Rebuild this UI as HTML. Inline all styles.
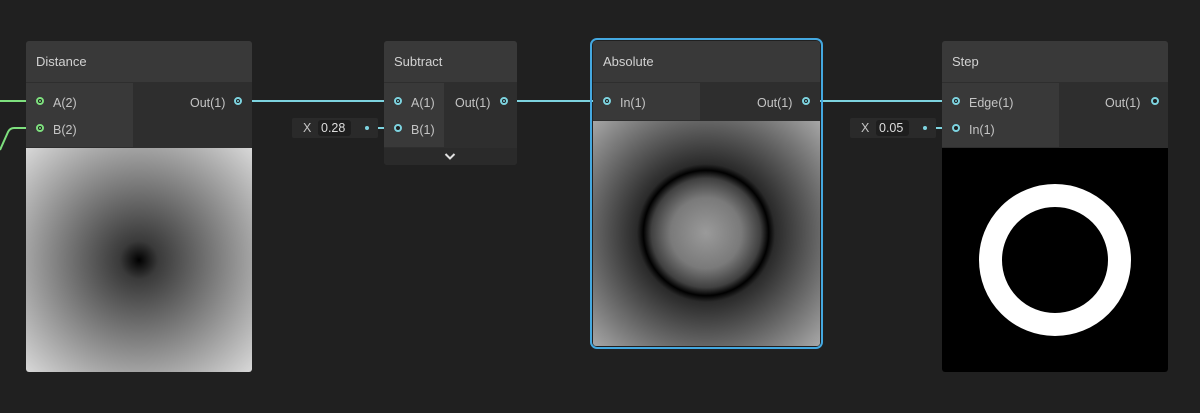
<!DOCTYPE html>
<html><head><style>
body{margin:0;width:1200px;height:413px;background:#202020;position:relative;overflow:hidden;font-family:"Liberation Sans",sans-serif;color:#c4c4c4;font-size:12.5px}
.a{position:absolute}
.hd{background:#393939;font-size:13px;color:#d2d2d2;}
.in{background:#393939}
.out{background:#2e2e2e}
.port{position:absolute;width:8px;height:8px;border-radius:50%;box-sizing:border-box}
.g{border:2px solid #7ee07e;background:#202020}
.g::after,.c::after{content:"";position:absolute;left:1px;top:1px;width:2px;height:2px;border-radius:50%}
.g::after{background:#7ee07e}
.c{border:2px solid #7dd3df;background:#202020}
.c.f::after{background:#7dd3df}
.wire{position:absolute;height:2px;background:#7dd3df}
</style></head><body>
<svg class="a" style="left:0;top:0" width="40" height="180"><path d="M0 101 H28" stroke="#7ee07e" stroke-width="2" fill="none"/><path d="M0 150 L8 132 Q10 128 14 128 H28" stroke="#7ee07e" stroke-width="2" fill="none"/></svg>
<div class="wire" style="left:245px;top:100px;width:150px"></div>
<div class="wire" style="left:510px;top:100px;width:95px"></div>
<div class="wire" style="left:815px;top:100px;width:140px"></div>
<div class="wire" style="left:370px;top:127px;width:25px"></div>
<div class="wire" style="left:928px;top:127px;width:25px"></div>

<!-- Distance -->
<div class="a" style="left:26px;top:41px;width:226px;height:331px;background:#2e2e2e;border-radius:3px;overflow:hidden">
<div class="a hd" style="left:0;top:0;width:226px;height:41px;line-height:41px;padding-left:10px;box-sizing:border-box">Distance</div>
<div class="a in" style="left:0;top:42px;width:107px;height:64px"></div>
<div class="a out" style="left:108px;top:42px;width:118px;height:64px"></div>
<div class="port g" style="left:10px;top:56px"></div><div class="a" style="left:27px;top:55px">A(2)</div>
<div class="port g" style="left:10px;top:83px"></div><div class="a" style="left:27px;top:82px">B(2)</div>
<div class="a" style="left:164px;top:55px">Out(1)</div><div class="port c f" style="left:208px;top:56px"></div>
<div class="a" style="left:0;top:107px;width:226px;height:224px;background:radial-gradient(circle farthest-corner at 113px 112px,#000 0,#3a3a3a 12%,#d8d8d8 100%)"></div>
</div>

<!-- X fields -->
<div class="a" style="left:292px;top:118px;width:86px;height:20px;background:#2a2a2a;border-radius:2px"><span class="a" style="left:11px;top:3px">X</span><div class="a" style="left:26px;top:2px;width:33px;height:16px;background:#1e1e1e;border-radius:3px;color:#ddd;line-height:16px;padding-left:3px;box-sizing:border-box;overflow:hidden">0.28</div><div class="a" style="left:73px;top:8px;width:4px;height:4px;border-radius:50%;background:#7dd3df"></div></div>
<div class="a" style="left:850px;top:118px;width:86px;height:20px;background:#2a2a2a;border-radius:2px"><span class="a" style="left:11px;top:3px">X</span><div class="a" style="left:26px;top:2px;width:33px;height:16px;background:#1e1e1e;border-radius:3px;color:#ddd;line-height:16px;padding-left:3px;box-sizing:border-box;overflow:hidden">0.05</div><div class="a" style="left:73px;top:8px;width:4px;height:4px;border-radius:50%;background:#7dd3df"></div></div>

<!-- Subtract -->
<div class="a" style="left:384px;top:41px;width:133px;height:124px;background:#2e2e2e;border-radius:3px;overflow:hidden">
<div class="a hd" style="left:0;top:0;width:133px;height:41px;line-height:41px;padding-left:10px;box-sizing:border-box">Subtract</div>
<div class="a in" style="left:0;top:42px;width:60px;height:64px"></div>
<div class="a out" style="left:60px;top:42px;width:73px;height:64px"></div>
<div class="port c f" style="left:10px;top:56px"></div><div class="a" style="left:27px;top:55px">A(1)</div>
<div class="port c" style="left:10px;top:83px"></div><div class="a" style="left:27px;top:82px">B(1)</div>
<div class="a" style="left:71px;top:55px">Out(1)</div><div class="port c f" style="left:116px;top:56px"></div>
<div class="a" style="left:0;top:107px;width:133px;height:17px;background:#2a2a2a"></div>
<svg class="a" style="left:60px;top:111px" width="12" height="10"><path d="M1.5 2 L6 6.5 L10.5 2" stroke="#e0e0e0" stroke-width="2" fill="none"/></svg>
</div>

<!-- Absolute -->
<div class="a" style="left:590px;top:38px;width:233px;height:311px;border:2px solid #44a8e0;border-radius:7px;box-sizing:border-box"></div>
<div class="a" style="left:593px;top:41px;width:227px;height:305px;background:#2e2e2e;border-radius:3px;overflow:hidden">
<div class="a hd" style="left:0;top:0;width:227px;height:41px;line-height:41px;padding-left:10px;box-sizing:border-box">Absolute</div>
<div class="a in" style="left:0;top:42px;width:107px;height:37px"></div>
<div class="a out" style="left:107px;top:42px;width:120px;height:37px"></div>
<div class="port c f" style="left:10px;top:56px"></div><div class="a" style="left:27px;top:55px">In(1)</div>
<div class="a" style="left:164px;top:55px">Out(1)</div><div class="port c f" style="left:209px;top:56px"></div>
<div class="a" style="left:0;top:80px;width:227px;height:225px;background:radial-gradient(circle farthest-corner at 113px 112px,#9a9a9a 0,#7a7a7a 22%,#404040 34%,#000 39%,#2a2a2a 43%,#a8a8a8 100%)"></div>
</div>

<!-- Step -->
<div class="a" style="left:942px;top:41px;width:226px;height:331px;background:#2e2e2e;border-radius:3px;overflow:hidden">
<div class="a hd" style="left:0;top:0;width:226px;height:41px;line-height:41px;padding-left:10px;box-sizing:border-box">Step</div>
<div class="a in" style="left:0;top:42px;width:117px;height:64px"></div>
<div class="a out" style="left:117px;top:42px;width:109px;height:64px"></div>
<div class="port c f" style="left:10px;top:56px"></div><div class="a" style="left:27px;top:55px">Edge(1)</div>
<div class="port c" style="left:10px;top:83px"></div><div class="a" style="left:27px;top:82px">In(1)</div>
<div class="a" style="left:163px;top:55px">Out(1)</div><div class="port c" style="left:209px;top:56px"></div>
<div class="a" style="left:0;top:107px;width:226px;height:224px;background:#000"></div>
<div class="a" style="left:37px;top:143px;width:152px;height:152px;border-radius:50%;box-sizing:border-box;border:23px solid #fff"></div>
</div>
</body></html>
